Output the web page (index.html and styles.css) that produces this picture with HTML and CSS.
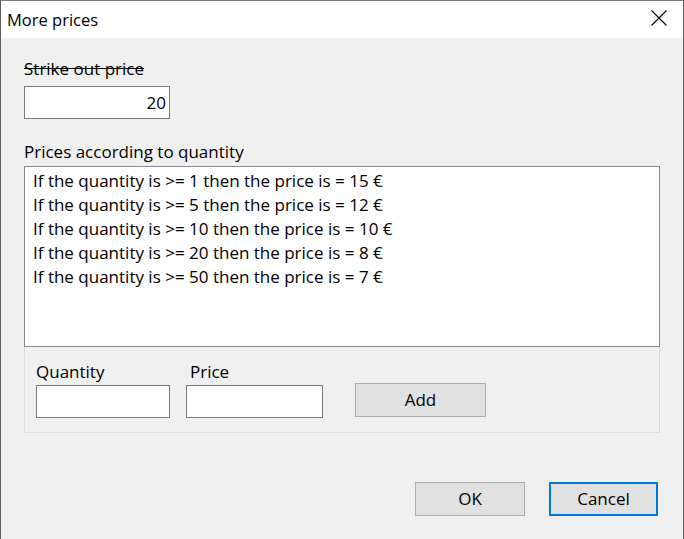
FILE: index.html
```html
<!DOCTYPE html>
<html>
<head>
<meta charset="utf-8">
<title>More prices</title>
<link rel="stylesheet" href="styles.css">
</head>
<body>
<div class="window">
  <div class="titlebar">
    <span class="title">More prices</span>
    <svg class="close" width="16" height="16" viewBox="0 0 16 16"><path d="M0.5 0.5 L15.5 15.5 M15.5 0.5 L0.5 15.5" stroke="#000" stroke-width="1.1" fill="none"/></svg>
  </div>
  <div class="content">
    <div class="label strike">Strike out price</div>
    <div class="input input-strike">20</div>
    <div class="label label-list">Prices according to quantity</div>
    <div class="listbox">
      <div class="item">If the quantity is &gt;= 1 then the price is = 15 €</div>
      <div class="item">If the quantity is &gt;= 5 then the price is = 12 €</div>
      <div class="item">If the quantity is &gt;= 10 then the price is = 10 €</div>
      <div class="item">If the quantity is &gt;= 20 then the price is = 8 €</div>
      <div class="item">If the quantity is &gt;= 50 then the price is = 7 €</div>
    </div>
    <div class="panel">
      <div class="field field-qty">
        <div class="label">Quantity</div>
        <div class="input"></div>
      </div>
      <div class="field field-price">
        <div class="label">Price</div>
        <div class="input"></div>
      </div>
      <div class="btn btn-add">Add</div>
    </div>
    <div class="footer">
      <div class="btn btn-ok">OK</div>
      <div class="btn btn-cancel">Cancel</div>
    </div>
  </div>
</div>
</body>
</html>
```

FILE: styles.css
```css
html, body {
  margin: 0;
  padding: 0;
}
body {
  width: 684px;
  height: 539px;
  overflow: hidden;
  font-family: "Open Sans", "Noto Sans", sans-serif;
  font-size: 17px;
  color: #000;
  background: #f0f0f0;
}
.window {
  box-sizing: border-box;
  width: 684px;
  height: 539px;
  border-top: 1px solid #7a7a7a;
  border-left: 1px solid #5e5e5e;
  border-right: 1px solid #5e5e5e;
  background: #f0f0f0;
}
.titlebar {
  height: 37px;
  background: #fff;
  display: flex;
  align-items: center;
  justify-content: space-between;
  padding: 0 16px 0 6px;
}
.title {
  font-size: 16.5px;
  line-height: 20px;
  margin-top: 0;
}
.close {
  display: block;
  width: 16px;
  height: 16px;
  margin-top: -3px;
}
.content {
  padding: 21px 0 0 23px;
}
.label {
  line-height: 20px;
  height: 20px;
}
.strike {
  text-decoration: line-through;
}
.input {
  box-sizing: border-box;
  background: #fff;
  border: 1px solid #7a7a7a;
  height: 33px;
  line-height: 31px;
}
.input-strike {
  width: 146px;
  margin-top: 7px;
  text-align: right;
  padding-right: 3px;
}
.label-list {
  margin-top: 23px;
}
.listbox {
  box-sizing: border-box;
  margin-top: 4px;
  width: 636px;
  height: 181px;
  background: #fff;
  border: 1px solid #828790;
  padding: 2px 0 0 8px;
}
.item {
  line-height: 24px;
  height: 24px;
}
.panel {
  box-sizing: border-box;
  width: 636px;
  height: 86px;
  border: 1px solid #dcdcdc;
  border-top: none;
  display: flex;
  align-items: flex-start;
  padding: 15px 0 0 11px;
}
.field .label {
  margin-bottom: 3px;
}
.field-qty .input {
  width: 134px;
}
.field-price {
  margin-left: 16px;
}
.field-price .label {
  padding-left: 4px;
}
.field-price .input {
  width: 137px;
}
.btn {
  box-sizing: border-box;
  height: 34px;
  background: #e1e1e1;
  border: 1px solid #adadad;
  text-align: center;
  line-height: 32px;
}
.btn-add {
  width: 131px;
  margin-left: 32px;
  margin-top: 21px;
}
.footer {
  display: flex;
  justify-content: flex-end;
  width: 634px;
  margin-top: 49px;
}
.btn-ok {
  width: 110px;
}
.btn-cancel {
  width: 109px;
  margin-left: 24px;
  border: 2px solid #0078d7;
  line-height: 30px;
}
```
